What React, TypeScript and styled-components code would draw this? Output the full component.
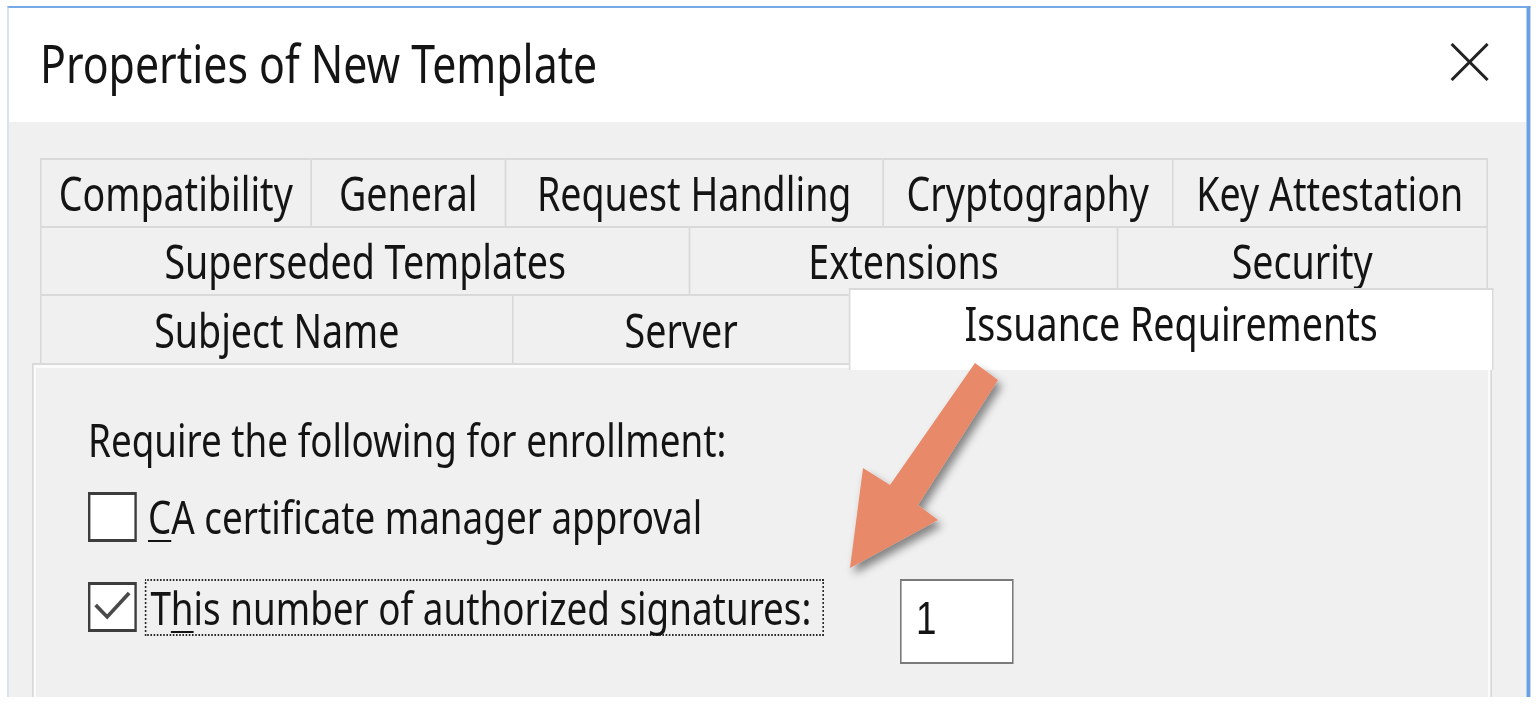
import styled, { createGlobalStyle } from 'styled-components';

// the reference is a horizontally squeezed screenshot, so the dialog is laid
// out at full width and squeezed back with one transform
const SQUEEZE = 0.8;

const GlobalStyle = createGlobalStyle`
  html, body {
    margin: 0;
    padding: 0;
    background: #fff;
    overflow: hidden;
  }
  body {
    font-family: "Noto Sans", "Open Sans", sans-serif;
    color: #141414;
  }
`;

const Page = styled.div`
  position: relative;
  width: 1536px;
  height: 705px;
  overflow: hidden;
  background: #fff;
`;

const Stage = styled.div`
  width: ${1536 / SQUEEZE}px;
  height: 705px;
  box-sizing: border-box;
  padding: 6px 0 0 9px;
  transform: scaleX(${SQUEEZE});
  transform-origin: 0 0;
`;

const Window = styled.div`
  width: 1904px;
  height: 691px;
  box-sizing: border-box;
  border-top: 2px solid #78a9e6;
  border-left: 2px solid #cfdcec;
  border-right: 5px solid #6aa0e2;
  display: flex;
  flex-direction: column;
  overflow: hidden;
`;

const TitleBar = styled.header`
  height: 114px;
  flex: none;
  background: #fff;
  display: flex;
  align-items: center;
  justify-content: space-between;
  padding: 0 46px 6px 39px;
  box-sizing: border-box;
`;

const Title = styled.h1`
  margin: 0;
  font-size: 53.5px;
  font-weight: 400;
  color: #141414;
`;

const CloseButton = styled.button`
  border: 0;
  padding: 0;
  background: none;
  width: 50px;
  height: 38px;
  display: flex;

  svg {
    width: 100%;
    height: 100%;
  }
`;

const Body = styled.div`
  flex: 1;
  min-height: 0;
  background: #f0f0f0;
  padding: 36px 0 0 29px;
  display: flex;
  flex-direction: column;
`;

const TabStrip = styled.div`
  margin-left: 10px;
  display: flex;
  flex-direction: column;
`;

const TabRow = styled.div`
  display: flex;

  & + & {
    margin-top: -2px;
  }
`;

const Tab = styled.div<{ $w: number; $h?: number }>`
  width: ${(p) => p.$w}px;
  height: ${(p) => p.$h ?? 70}px;
  flex: none;
  box-sizing: border-box;
  border: 2px solid #d9d9d9;
  background: #f0f0f0;
  display: flex;
  align-items: center;
  justify-content: center;
  font-size: 47px;
  color: #141414;
  white-space: nowrap;

  & + & {
    margin-left: -2px;
  }
`;

const ActiveTab = styled(Tab)`
  position: relative;
  z-index: 1;
  align-self: flex-start;
  margin-top: -6px;
  margin-bottom: -17px;
  background: #fff;
  border-bottom: 0;
  padding-bottom: 14px;
`;

const Panel = styled.section`
  width: 1825px;
  height: 420px;
  flex: none;
  margin-top: -2px;
  box-sizing: border-box;
  border: 2px solid #d9d9d9;
  box-shadow: inset 0 0 0 3px #fbfbfb;
  background: #f0f0f0;
  padding: 47px 0 0 68px;
  display: flex;
  flex-direction: column;
  font-size: 46px;
  line-height: 1.2;
`;

const Heading = styled.div`
  margin-bottom: 22px;
`;

const OptionRow = styled.div<{ $top?: number }>`
  display: flex;
  align-items: ${(p) => (p.$top ? 'flex-start' : 'center')};
  margin-top: ${(p) => p.$top ?? 0}px;
`;

const CheckBox = styled.span<{ $offset?: number }>`
  width: 61px;
  height: 50px;
  flex: none;
  box-sizing: border-box;
  border: 3px solid #3d3d3d;
  border-left-width: 3.5px;
  border-right-width: 3.5px;
  background: #fff;
  margin-top: ${(p) => p.$offset ?? 0}px;
  display: flex;

  svg {
    width: 100%;
    height: 100%;
  }
`;

const OptionLabel = styled.span`
  margin-left: 14px;
`;

const FocusLabel = styled.span`
  width: 849px;
  height: 57px;
  margin-left: 10px;
  box-sizing: border-box;
  border: 2px dotted #2a2a2a;
  padding: 0 5px;
  display: flex;
  align-items: center;
  white-space: nowrap;
`;

const Key = styled.u`
  text-decoration-thickness: 2px;
  text-underline-offset: 6px;
`;

const NumberBox = styled.div`
  width: 142px;
  height: 85px;
  margin-left: 95px;
  box-sizing: border-box;
  border: 2px solid #7a7a7a;
  background: #fff;
  padding: 0 0 6px 18px;
  display: flex;
  align-items: center;
  font-family: "Liberation Sans", Arial, sans-serif;
  font-size: 46px;
`;

const Pointer = styled.svg`
  position: absolute;
  left: 820px;
  top: 350px;
  width: 220px;
  height: 250px;
  z-index: 2;
  pointer-events: none;
`;

function CheckMark() {
  return (
    <svg viewBox="0 0 42 44" preserveAspectRatio="none">
      <polyline
        points="5,20 16,32 37,8"
        fill="none"
        stroke="#4a4a4a"
        strokeWidth="3.5"
        strokeLinejoin="miter"
      />
    </svg>
  );
}

function App() {
  return (
    <Page>
      <GlobalStyle />
      <Stage>
        <Window>
          <TitleBar>
            <Title>Properties of New Template</Title>
            <CloseButton aria-label="Close">
              <svg viewBox="0 0 40 38" preserveAspectRatio="none">
                <path d="M2 1 L38 37 M38 1 L2 37" stroke="#222" strokeWidth="3" />
              </svg>
            </CloseButton>
          </TitleBar>

          <Body>
            <TabStrip>
              <TabRow>
                <Tab $w={339.5}>Compatibility</Tab>
                <Tab $w={245.5}>General</Tab>
                <Tab $w={473.5}>Request Handling</Tab>
                <Tab $w={364.5}>Cryptography</Tab>
                <Tab $w={394.5}>Key Attestation</Tab>
              </TabRow>
              <TabRow>
                <Tab $w={813}>Superseded Templates</Tab>
                <Tab $w={537}>Extensions</Tab>
                <Tab $w={463.5}>Security</Tab>
              </TabRow>
              <TabRow>
                <Tab $w={592} $h={71}>Subject Name</Tab>
                <Tab $w={423} $h={71}>Server</Tab>
                <ActiveTab $w={806} $h={82}>Issuance Requirements</ActiveTab>
              </TabRow>
            </TabStrip>

            <Panel>
              <Heading>Require the following for enrollment:</Heading>
              <OptionRow>
                <CheckBox />
                <OptionLabel>
                  <Key>C</Key>A certificate manager approval
                </OptionLabel>
              </OptionRow>
              <OptionRow $top={35}>
                <CheckBox $offset={3}>
                  <CheckMark />
                </CheckBox>
                <FocusLabel>
                  <span>
                    T<Key>h</Key>is number of authorized signatures:
                  </span>
                </FocusLabel>
                <NumberBox>1</NumberBox>
              </OptionRow>
            </Panel>
          </Body>
        </Window>
      </Stage>

      <Pointer viewBox="0 0 220 250">
        <defs>
          <filter id="arrow-shadow" x="-30%" y="-30%" width="160%" height="160%">
            <feDropShadow dx="4" dy="6" stdDeviation="4" floodColor="#000" floodOpacity="0.45" />
          </filter>
        </defs>
        <polygon
          points="155,13 178,30 98,155 118,170 30,218 43,118 70,135"
          fill="#e8896a"
          filter="url(#arrow-shadow)"
        />
      </Pointer>
    </Page>
  );
}

export default App;
